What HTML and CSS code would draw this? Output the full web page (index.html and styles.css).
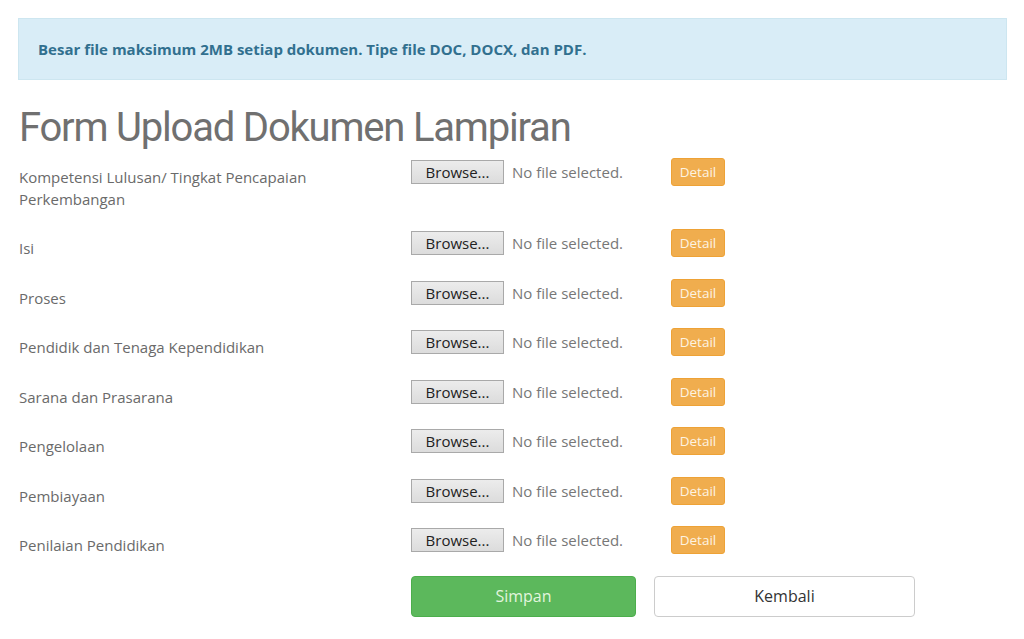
FILE: index.html
```html
<!DOCTYPE html>
<html lang="en">
<head>
  <meta charset="UTF-8" />
  <title>Form Upload Dokumen Lampiran</title>
  <link rel="stylesheet" href="styles.css">
</head>
<body>
  <div class="page">
    <div class="alert">Besar file maksimum 2MB setiap dokumen. Tipe file DOC, DOCX, dan PDF.</div>

    <h1>Form Upload Dokumen Lampiran</h1>

    <form class="upload-form">
      <div class="row">
        <label class="label">Kompetensi Lulusan/ Tingkat Pencapaian Perkembangan</label>
        <div class="file"><button type="button" class="browse">Browse...</button><span class="no-file">No file selected.</span></div>
        <button type="button" class="detail">Detail</button>
      </div>
      <div class="row">
        <label class="label">Isi</label>
        <div class="file"><button type="button" class="browse">Browse...</button><span class="no-file">No file selected.</span></div>
        <button type="button" class="detail">Detail</button>
      </div>
      <div class="row">
        <label class="label">Proses</label>
        <div class="file"><button type="button" class="browse">Browse...</button><span class="no-file">No file selected.</span></div>
        <button type="button" class="detail">Detail</button>
      </div>
      <div class="row">
        <label class="label">Pendidik dan Tenaga Kependidikan</label>
        <div class="file"><button type="button" class="browse">Browse...</button><span class="no-file">No file selected.</span></div>
        <button type="button" class="detail">Detail</button>
      </div>
      <div class="row">
        <label class="label">Sarana dan Prasarana</label>
        <div class="file"><button type="button" class="browse">Browse...</button><span class="no-file">No file selected.</span></div>
        <button type="button" class="detail">Detail</button>
      </div>
      <div class="row">
        <label class="label">Pengelolaan</label>
        <div class="file"><button type="button" class="browse">Browse...</button><span class="no-file">No file selected.</span></div>
        <button type="button" class="detail">Detail</button>
      </div>
      <div class="row">
        <label class="label">Pembiayaan</label>
        <div class="file"><button type="button" class="browse">Browse...</button><span class="no-file">No file selected.</span></div>
        <button type="button" class="detail">Detail</button>
      </div>
      <div class="row">
        <label class="label">Penilaian Pendidikan</label>
        <div class="file"><button type="button" class="browse">Browse...</button><span class="no-file">No file selected.</span></div>
        <button type="button" class="detail">Detail</button>
      </div>

      <div class="actions">
        <button type="submit" class="btn-save">Simpan</button>
        <button type="button" class="btn-back">Kembali</button>
      </div>
    </form>
  </div>
</body>
</html>
```

FILE: styles.css
```css
body { margin: 0; font-family: "Open Sans", "Liberation Sans", sans-serif; color: #666; background: #fff; }
.page { padding: 18px 17px 0 18px; }

.alert {
  background: #d9edf7;
  border: 1px solid #cde6f0;
  color: #31708f;
  font-weight: bold;
  font-size: 15px;
  line-height: 20px;
  padding: 20px 19px 20px 19px;
}

h1 {
  font-family: Roboto, "Liberation Sans", sans-serif;
  font-size: 40px;
  font-weight: normal;
  letter-spacing: -1.2px;
  color: #707070;
  margin: 26px 0 7.5px 1px;
  line-height: 44px;
}

.row {
  display: grid;
  grid-template-columns: 393px 260px 54px;
  align-items: start;
  margin-bottom: 19.5px;
}
.label {
  font-size: 15px;
  line-height: 22px;
  padding: 8px 60px 0 1px;
  color: #6a6a6a;
}
.file { display: flex; align-items: center; height: 28px; }
.browse {
  height: 24px;
  width: 93px;
  padding: 0;
  font-family: inherit;
  font-size: 15px;
  color: #222;
  background: linear-gradient(#ececec, #dcdcdc);
  border: 1px solid #a9a9a9;
  border-radius: 0;
}
.no-file { margin-left: 8px; font-size: 15px; color: #777; }
.detail {
  height: 28px;
  width: 54px;
  padding: 0;
  font-family: inherit;
  font-size: 13.5px;
  color: #fdf3e2;
  background: #f0ad4e;
  border: 1px solid #eea236;
  border-radius: 3px;
}

.actions { display: flex; gap: 18px; padding-left: 393px; }
.actions button {
  height: 41px;
  font-family: inherit;
  font-size: 16px;
  border-radius: 4px;
}
.btn-save { width: 225px; background: #5cb85c; border: 1px solid #4cae4c; color: #e2f5de; }
.btn-back { width: 261px; background: #fff; border: 1px solid #ccc; color: #333; }
```
